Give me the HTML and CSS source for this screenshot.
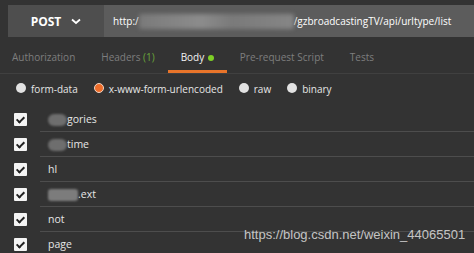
FILE: index.html
```html
<!DOCTYPE html>
<html lang="en">
<head>
    <meta charset="UTF-8">
    <meta name="viewport" content="width=device-width, initial-scale=1.0">
    <title>POST urltype/list</title>
    <link rel="stylesheet" href="styles.css">
</head>
<body>
    <div class="request-bar">
        <div class="method">
            <span>POST</span>
            <svg class="chevron" width="10" height="7" viewBox="0 0 10 7">
                <path d="M1 1.5 L5 5 L9 1.5" fill="none" stroke="#fff" stroke-width="1.8"/>
            </svg>
        </div>
        <div class="url">
            <span>http:/</span><span class="smudge url-smudge"></span><span>/gzbroadcastingTV/api/urltype/list</span>
        </div>
    </div>

    <div class="tabs">
        <div class="tab">Authorization</div>
        <div class="tab">Headers <span class="count">(1)</span></div>
        <div class="tab active">Body <span class="dot"></span></div>
        <div class="tab">Pre-request Script</div>
        <div class="tab">Tests</div>
    </div>

    <div class="body-modes">
        <label class="mode"><span class="radio"></span>form-data</label>
        <label class="mode"><span class="radio checked"></span>x-www-form-urlencoded</label>
        <label class="mode"><span class="radio"></span>raw</label>
        <label class="mode"><span class="radio"></span>binary</label>
    </div>

    <div class="params">
        <div class="param">
            <span class="check"></span>
            <div class="key"><span class="smudge"></span>gories</div>
        </div>
        <div class="param">
            <span class="check"></span>
            <div class="key"><span class="smudge"></span>time</div>
        </div>
        <div class="param">
            <span class="check"></span>
            <div class="key">hl</div>
        </div>
        <div class="param">
            <span class="check"></span>
            <div class="key"><span class="smudge wide"></span>.ext</div>
        </div>
        <div class="param">
            <span class="check"></span>
            <div class="key">not</div>
        </div>
        <div class="param">
            <span class="check"></span>
            <div class="key">page</div>
        </div>
    </div>

    <div class="watermark">https://blog.csdn.net/weixin_44065501</div>
</body>
</html>
```

FILE: styles.css
```css
body {
    margin: 0;
    background-color: #333333;
    font-family: "Open Sans", "DejaVu Sans", sans-serif;
    color: #e6e6e6;
    overflow: hidden;
    position: relative;
    height: 253px;
}

.request-bar {
    display: flex;
    height: 32px;
    padding: 5px 0 0 8px;
}

.method {
    width: 96px;
    flex-shrink: 0;
    background-color: #4e4e4e;
    display: flex;
    align-items: center;
    justify-content: center;
    gap: 10px;
    font-size: 12px;
    font-weight: bold;
    color: #fff;
}

.url {
    flex: 1;
    min-width: 0;
    background-color: #5c5c5c;
    display: flex;
    align-items: center;
    padding-left: 9px;
    font-size: 10px;
    color: #fff;
    white-space: nowrap;
    overflow: hidden;
}

.smudge {
    display: inline-block;
    width: 19px;
    height: 12px;
    background-color: #6e6e6e;
    border-radius: 6px;
    filter: blur(1.2px);
    vertical-align: middle;
}

.smudge.wide {
    width: 30px;
    background-color: #7c7c7c;
    border-radius: 3px;
}

.url-smudge {
    width: 155px;
    height: 15px;
    background: linear-gradient(90deg, #7a7a7a, #8c8c8c 40%, #7a7a7a 60%, #868686);
    border-radius: 2px;
    filter: blur(2px);
}

.tabs {
    display: flex;
    height: 35px;
    margin-top: 1px;
    border-bottom: 1px solid #404040;
}

.tab {
    padding: 3px 13px 0;
    font-size: 10px;
    line-height: 32px;
    color: #7e7e7e;
    white-space: nowrap;
}

.tab:first-child {
    padding-left: 12px;
}

.tab .count {
    color: #6aa63a;
}

.tab.active {
    color: #f2f2f2;
    box-shadow: inset 0 -3px 0 #e8742a;
}

.dot {
    display: inline-block;
    width: 6px;
    height: 6px;
    border-radius: 50%;
    background-color: #7ecf26;
    vertical-align: 0;
    margin-left: 1px;
}

.body-modes {
    display: flex;
    gap: 16px;
    padding: 0 0 4px 16px;
    height: 29px;
    align-items: center;
}

.mode {
    display: flex;
    align-items: center;
    gap: 5px;
    font-size: 10px;
    color: #e6e6e6;
}

.radio {
    width: 10px;
    height: 10px;
    border-radius: 50%;
    background-color: #e2e2e2;
    box-sizing: border-box;
    position: relative;
    top: -1px;
}

.radio.checked {
    background-color: #ee6d2a;
    border: 1.5px solid #f1d6c6;
}

.param {
    display: flex;
    align-items: center;
    height: 24px;
    position: relative;
}

.param + .param {
    margin-top: 1px;
}

.param::after {
    content: "";
    position: absolute;
    left: 40px;
    right: 0;
    bottom: -1px;
    height: 1px;
    background-color: #4d4d4d;
}

.param:last-child::after {
    display: none;
}

.check {
    width: 13px;
    height: 13px;
    margin-left: 14px;
    background-color: #f4f4f4;
    border-radius: 1px;
    position: relative;
    flex-shrink: 0;
}

.check::after {
    content: "";
    position: absolute;
    left: 4px;
    top: 2px;
    width: 3px;
    height: 6px;
    border: solid #222;
    border-width: 0 2px 2px 0;
    transform: rotate(45deg);
}

.key {
    margin-left: 21px;
    font-size: 10.5px;
    color: #e6e6e6;
    white-space: nowrap;
}

.watermark {
    position: absolute;
    left: 244px;
    top: 227px;
    font-family: "Liberation Sans", Arial, sans-serif;
    font-size: 13px;
    color: rgba(235, 235, 235, 0.8);
    white-space: nowrap;
}
```
